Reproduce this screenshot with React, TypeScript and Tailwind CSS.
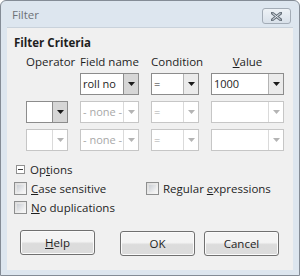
import React from "react";

const font = { fontFamily: '"Open Sans", "Noto Sans", sans-serif' };

function Arrow({ on }: { on: boolean }) {
  return (
    <svg width="7" height="4" viewBox="0 0 7 4">
      <path d="M0 0H7L3.5 4Z" fill={on ? "#1a1a1a" : "#b4b4b4"} />
    </svg>
  );
}

type ComboProps = {
  text?: string;
  on?: boolean;
  dark?: boolean;
};

function Combo({ text = "", on = false, dark = false }: ComboProps) {
  return (
    <div
      className={`flex h-[22px] bg-white border ${
        on ? "border-[#8c8c8c]" : "border-[#c6c6c6]"
      }`}
    >
      <div
        className={`flex-1 flex items-center pl-[2px] text-[11px] overflow-hidden whitespace-nowrap ${
          on ? "text-[#1e1e1e]" : "text-[#a8a8a8]"
        }`}
      >
        {text}
      </div>
      <div
        className={`w-[15px] flex items-center justify-center border-l ${
          on
            ? dark
              ? "bg-[#d6d6d6] border-[#8c8c8c]"
              : "bg-[#ebebeb] border-[#b4b4b4]"
            : "bg-white border-[#dadada]"
        }`}
      >
        <Arrow on={on} />
      </div>
    </div>
  );
}

function Check({ label, hot }: { label: string; hot: number }) {
  return (
    <div className="flex items-center h-[13px]">
      <div className="w-[13px] h-[13px] border border-[#8e8f8f] bg-gradient-to-br from-[#dcdcdc] to-[#f8f8f8] p-[2px]">
        <div className="w-full h-full bg-gradient-to-br from-[#cbcfd5] to-[#f6f6f6]" />
      </div>
      <span className="ml-[4px] text-[11.5px] text-[#1e1e1e] leading-none whitespace-nowrap">
        {label.slice(0, hot)}
        <span className="underline">{label[hot]}</span>
        {label.slice(hot + 1)}
      </span>
    </div>
  );
}

function Button({ label, hot }: { label: string; hot?: number }) {
  return (
    <button className="w-[75px] h-[25px] rounded-[3px] border border-[#707070] bg-gradient-to-b from-[#f4f4f4] from-45% to-[#dcdcdc] to-55% text-[11.5px] text-[#1e1e1e] shadow-[inset_0_0_0_1px_#fbfbfb]">
      {hot === undefined ? (
        label
      ) : (
        <>
          {label.slice(0, hot)}
          <span className="underline">{label[hot]}</span>
          {label.slice(hot + 1)}
        </>
      )}
    </button>
  );
}

export default function App() {
  return (
    <div
      style={font}
      className="w-[300px] h-[276px] bg-[#dde6ef] border border-[#848c96] rounded-t-[6px] flex flex-col overflow-hidden"
    >
      {/* Title bar */}
      <div className="h-[26px] flex items-start justify-between pl-[11px] pr-[8px]">
        <span className="mt-[8px] text-[11.5px] leading-none text-[#6e7378]">Filter</span>
        <div className="mt-[7px] w-[29px] h-[16px] rounded-[3px] border border-[#a3acb6] bg-gradient-to-b from-[#eef2f6] to-[#d9e1ea] flex items-center justify-center">
          <svg width="11" height="9" viewBox="0 0 11 9">
            <path
              d="M1 1L10 8M10 1L1 8"
              stroke="#68727c"
              strokeWidth="3"
              strokeLinecap="square"
            />
            <path d="M1.5 1.3L9.5 7.7M9.5 1.3L1.5 7.7" stroke="#e8edf2" strokeWidth="1" />
          </svg>
        </div>
      </div>

      {/* Client area */}
      <div className="mx-[6px] h-[243px] bg-[#f0f0f0] border-t border-[#c9d2db]">
        <div className="pt-[7px] pl-[7px] text-[11.5px] font-bold leading-[16px] text-[#1e1e1e]">
          Filter Criteria
        </div>

        <div className="mt-[3px] ml-[19px] grid grid-cols-[42px_59px_48px_73px] gap-x-[12px] gap-y-[6px] text-[11.5px] text-[#1e1e1e]">
          <div className="text-center leading-[16px] -mb-[3px] whitespace-nowrap">Operator</div>
          <div className="text-center leading-[16px] -mb-[3px] whitespace-nowrap">Field name</div>
          <div className="text-center leading-[16px] -mb-[3px] whitespace-nowrap">Condition</div>
          <div className="text-center leading-[16px] -mb-[3px] whitespace-nowrap">
            <span className="underline">V</span>alue
          </div>

          <div />
          <Combo text="roll no" on dark />
          <Combo text="=" on />
          <Combo text="1000" on />

          <Combo on dark />
          <Combo text="- none -" />
          <Combo text="=" />
          <Combo />

          <Combo />
          <Combo text="- none -" />
          <Combo text="=" />
          <Combo />
        </div>

        <div className="mt-[14px] ml-[9px] flex items-center h-[9px]">
          <div className="w-[9px] h-[9px] border border-[#919191] bg-white flex items-center justify-center">
            <div className="w-[5px] h-px bg-[#3c3c3c]" />
          </div>
          <span className="ml-[5px] text-[11.5px] text-[#1e1e1e] leading-none">
            Op<span className="underline">t</span>ions
          </span>
        </div>

        <div className="mt-[8px] ml-[7px] flex">
          <div className="w-[132px] flex flex-col gap-[6px]">
            <Check label="Case sensitive" hot={0} />
            <Check label="No duplications" hot={0} />
          </div>
          <Check label="Regular expressions" hot={8} />
        </div>

        <div className="mt-[16px] ml-[13px] flex">
          <Button label="Help" hot={0} />
          <div className="ml-[25px]">
            <Button label="OK" />
          </div>
          <div className="ml-[9px]">
            <Button label="Cancel" />
          </div>
        </div>
      </div>
    </div>
  );
}
